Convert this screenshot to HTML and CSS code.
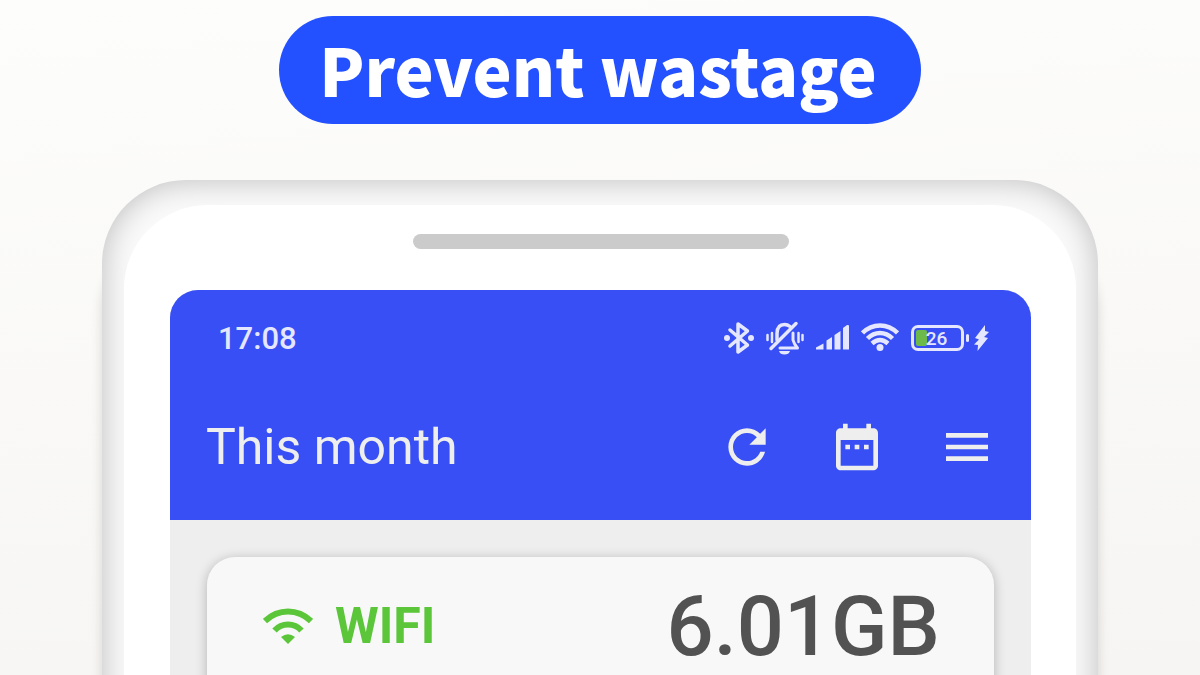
FILE: index.html
```
<!DOCTYPE html>
<html lang="en">
<head>
    <meta charset="UTF-8">
    <meta name="viewport" content="width=device-width, initial-scale=1.0">
    <title>Prevent wastage</title>
    <link rel="stylesheet" href="styles.css">
</head>
<body>
    <h1 class="banner">Prevent wastage</h1>

    <!-- Phone -->
    <div class="phone">
        <div class="phone-body">
            <div class="speaker"></div>

            <main class="screen">
                <header class="app-header">
                    <!-- Status bar -->
                    <div class="status-bar">
                        <span class="clock">17:08</span>
                        <div class="status-icons">
                            <svg width="30" height="34" viewBox="0 0 30 34" aria-hidden="true">
                                <path d="M6 9L23.500 24L14 31V3L23.500 10L6 25" fill="none" stroke="currentColor" stroke-width="3.500" stroke-linejoin="round" stroke-linecap="round"/>
                                <circle cx="3" cy="17" r="3" fill="currentColor"/>
                                <circle cx="27" cy="17" r="3" fill="currentColor"/>
                            </svg>
                            <svg width="38" height="34" viewBox="0 0 38 34" aria-hidden="true">
                                <g fill="none" stroke="currentColor" stroke-linecap="round">
                                    <path d="M1.500 14v5M6 12v9M32.500 12v9M36.500 14v5" stroke-width="2.500"/>
                                    <path d="M11 19V12.500Q11 3.500 18.500 3.500Q21.500 3.500 24 5.500" stroke-width="3.500"/>
                                    <path d="M27 12v7q1 4 4.500 8H14" stroke-width="3" stroke-linejoin="round"/>
                                    <path d="M5 27.500L30 2.500" stroke-width="3.500"/>
                                </g>
                                <path d="M13 30h11q-1 3.500-5.500 3.500t-5.500-3.500z" fill="currentColor"/>
                            </svg>
                            <svg width="33" height="34" viewBox="0 0 33 34" fill="currentColor" aria-hidden="true">
                                <path d="M0 28.500V26.500L7.500 22.500V28.500z"/>
                                <path d="M10.500 28.500V19.500L16 16V28.500z"/>
                                <path d="M18.500 28.500V14L24.500 10V28.500z"/>
                                <path d="M27 28.500V7L31 4Q33 3.500 33 5V28.500z"/>
                            </svg>
                            <svg width="38" height="34" viewBox="0 0 38 34" aria-hidden="true">
                                <g fill="none" stroke="currentColor" stroke-width="4.500">
                                    <path d="M1.500 12Q9 4.500 19 4.500t17.500 7.500"/>
                                    <path d="M6.500 17.500Q12 12 19 12t12.500 5.500"/>
                                    <path d="M11 22.500Q15 19 19 19t8 3.500"/>
                                </g>
                                <circle cx="19" cy="26.500" r="3.500" fill="currentColor"/>
                            </svg>
                            <div class="power">
                                <div class="battery">
                                    <span class="battery-level"></span>
                                    <span class="battery-text">26</span>
                                </div>
                                <svg width="15" height="26" viewBox="0 0 15 26" fill="currentColor" aria-hidden="true">
                                    <path d="M11 0L1 13L5 14.500L0 19.500L4 20L3.500 26L14 13L10 12L15 7L11 6z"/>
                                </svg>
                            </div>
                        </div>
                    </div>

                    <!-- Toolbar -->
                    <div class="toolbar">
                        <h2 class="toolbar-title">This month</h2>
                        <div class="toolbar-actions">
                            <button class="icon-button" type="button" aria-label="Refresh">
                                <svg viewBox="0 0 24 24" fill="currentColor">
                                    <path d="M17.650 6.350C16.200 4.900 14.210 4 12 4c-4.420 0-7.990 3.580-7.990 8s3.570 8 7.990 8c3.730 0 6.840-2.550 7.730-6h-2.080c-.820 2.330-3.040 4-5.650 4-3.310 0-6-2.690-6-6s2.690-6 6-6c1.660 0 3.140.690 4.220 1.780L13 11h7V4l-2.350 2.350z"/>
                                </svg>
                            </button>
                            <button class="icon-button" type="button" aria-label="Select dates">
                                <svg viewBox="0 0 24 24" fill="currentColor">
                                    <path d="M9 11H7v2h2v-2zm4 0h-2v2h2v-2zm4 0h-2v2h2v-2zm2-7h-1V2h-2v2H8V2H6v2H5c-1.110 0-1.990.900-1.990 2L3 20c0 1.100.890 2 2 2h14c1.100 0 2-.900 2-2V6c0-1.100-.900-2-2-2zm0 16H5V9h14v11z"/>
                                </svg>
                            </button>
                            <button class="icon-button" type="button" aria-label="Menu">
                                <svg viewBox="0 0 24 24" fill="currentColor">
                                    <path d="M3 18h18v-2H3v2zm0-5h18v-2H3v2zm0-7v2h18V6H3z"/>
                                </svg>
                            </button>
                        </div>
                    </div>
                </header>

                <!-- Usage card -->
                <section class="card">
                    <div class="network">
                        <svg width="50" height="36" viewBox="0 0 50 36" aria-hidden="true">
                            <g fill="none" stroke="currentColor" stroke-width="6">
                                <path d="M2 13Q12 3.500 25 3.500T48 13"/>
                                <path d="M11.500 22.500Q17 16.500 25 16.500T38.500 22.500"/>
                            </g>
                            <path d="M18 29Q25 23.500 32 29L25 36z" fill="currentColor"/>
                        </svg>
                        <span class="network-name">WIFI</span>
                    </div>
                    <span class="usage">6.01GB</span>
                </section>
            </main>
        </div>
    </div>
</body>
</html>
```
FILE: styles.css
```
* {
    box-sizing: border-box;
}

body {
    margin: 0;
    height: 100vh;
    padding-top: 16px;
    overflow: hidden;
    display: flex;
    flex-direction: column;
    align-items: center;
    font-family: Roboto, sans-serif;
    background: linear-gradient(175deg, #fdfdfc, #f6f5f3);
}

.banner {
    flex-shrink: 0;
    margin: 0 0 56px;
    padding: 0 44px 4px 40px;
    border-radius: 54px;
    background: #2451ff;
    color: #fff;
    font-family: "Noto Sans CJK SC", sans-serif;
    font-size: 66px;
    font-weight: 900;
    line-height: 104px;
}

/* Phone */
.phone {
    flex: 1;
    min-height: 0;
    width: 83%;
    margin-bottom: -60px; /* runs off the bottom edge */
    padding: 25px 22px 0;
    border-radius: 84px 84px 0 0;
    background: #fafafa;
    box-shadow: inset 0 0 32px rgba(0, 0, 0, 0.25), 0 48px 12px rgba(0, 0, 0, 0.14);
}

.phone-body {
    display: flex;
    flex-direction: column;
    height: 100%;
    padding: 29px 45px 0 46px;
    border-radius: 84px 84px 0 0;
    background: #fff;
}

.speaker {
    flex-shrink: 0;
    width: 376px;
    max-width: 60%;
    height: 15px;
    margin: 0 auto 41px;
    border-radius: 8px;
    background: #cbcbcb;
}

.screen {
    display: flex;
    flex-direction: column;
    flex: 1;
    min-height: 0;
    border-radius: 28px 28px 0 0;
    overflow: hidden;
    background: #eee;
}

.app-header {
    flex-shrink: 0;
    padding: 24px 36px;
    background: #374ff5;
    color: #eee;
}

/* Status bar */
.status-bar {
    display: flex;
    align-items: center;
    justify-content: space-between;
    height: 48px;
    padding: 0 6px 0 12px;
    color: #e4e7ff;
}

.clock {
    font-size: 31px;
    font-weight: 500;
}

.status-icons {
    display: flex;
    align-items: center;
    gap: 12px;
}

.power {
    display: flex;
    align-items: center;
    gap: 10px;
}

.battery {
    position: relative;
    width: 53px;
    height: 26px;
    padding-right: 2px;
    border: 3px solid currentColor;
    border-radius: 7px;
    font-size: 19px;
    font-weight: 500;
    line-height: 21px;
    text-align: center;
}

/* Battery terminal */
.battery::after {
    content: "";
    position: absolute;
    top: 6px;
    right: -8px;
    width: 3px;
    height: 8px;
    border-radius: 2px;
    background: currentColor;
}

.battery-level {
    position: absolute;
    top: 2px;
    left: 2px;
    width: 11px;
    height: 16px;
    border-radius: 2px;
    background: #6dba4b;
}

.battery-text {
    position: relative;
}

/* Toolbar */
.toolbar {
    display: flex;
    align-items: center;
    justify-content: space-between;
    height: 98px;
    margin-top: 36px;
}

.toolbar-title {
    margin: 0;
    font-size: 50px;
    font-weight: 400;
}

.toolbar-actions {
    display: flex;
    gap: 54px;
}

.icon-button {
    width: 56px;
    height: 56px;
    padding: 0;
    border: none;
    background: none;
    color: inherit;
    cursor: pointer;
}

.icon-button svg {
    display: block;
    width: 100%;
}

/* Usage card */
.card {
    display: flex;
    flex: 1;
    align-items: flex-start;
    justify-content: space-between;
    margin: 37px 37px 0;
    padding: 20px 54px 0 56px;
    border-radius: 28px 28px 0 0;
    background: #f8f8f8;
    box-shadow: 0 2px 12px rgba(0, 0, 0, 0.25);
}

.network,
.usage {
    display: flex;
    align-items: center;
    height: 98px;
}

.network {
    gap: 22px;
    color: #5bc639;
}

.network-name {
    font-size: 50px;
    font-weight: 700;
}

.usage {
    color: #525252;
    font-size: 83px;
    font-weight: 500;
}
```
